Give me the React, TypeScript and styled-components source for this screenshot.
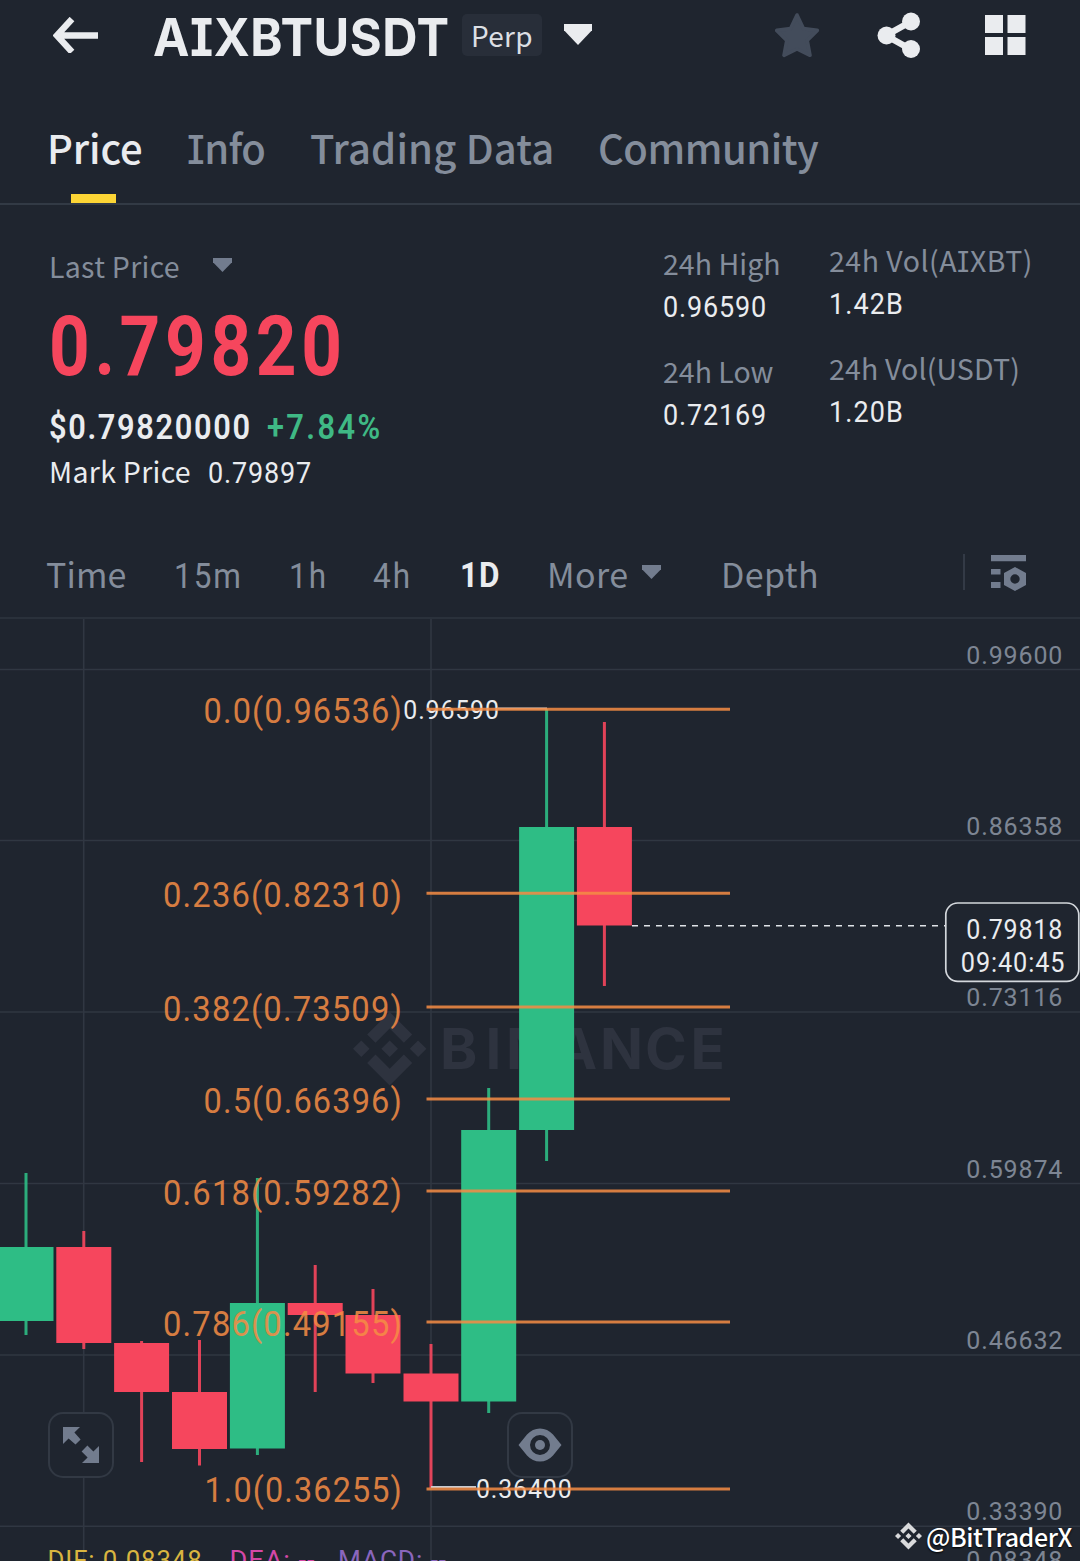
import React from 'react';
import styled, { createGlobalStyle } from 'styled-components';

const color = {
  bg: '#1f252f',
  text: '#eaecef',
  muted: '#848d9b',
  icon: '#727c8e',
  line: '#303742',
  green: '#2ebd85',
  red: '#f6465d',
  fib: '#f58c45',
  yellow: '#fcd535',
};

const sans = `'Noto Sans CJK SC', 'Noto Sans', sans-serif`;
const din = `Roboto, 'Liberation Sans', sans-serif`;

const GlobalStyle = createGlobalStyle`
  body { margin: 0; background: ${color.bg}; }
  * { box-sizing: border-box; }
`;

const Screen = styled.main`
  width: 1080px;
  height: 1561px;
  overflow: hidden;
  background: ${color.bg};
  color: ${color.text};
  font-family: ${sans};
  display: flex;
  flex-direction: column;
  white-space: nowrap;
`;

const Label = styled.span<{ $size?: number; $tone?: string; $weight?: number; $track?: number; $scale?: number }>`
  display: inline-block;
  font-family: ${sans};
  font-size: ${p => p.$size ?? 28.5}px;
  font-weight: ${p => p.$weight ?? 400};
  letter-spacing: ${p => p.$track ?? 0.3}px;
  color: ${p => p.$tone ?? color.muted};
  transform: scaleX(${p => p.$scale ?? 1});
  transform-origin: left;
`;

const Digits = styled.span<{
  $size?: number;
  $tone?: string;
  $weight?: number;
  $track?: number;
  $scale?: number;
  $drop?: number;
}>`
  display: inline-block;
  padding-top: ${p => p.$drop ?? 0}px;
  font-family: ${din};
  font-size: ${p => p.$size ?? 30}px;
  font-weight: ${p => p.$weight ?? 400};
  letter-spacing: ${p => p.$track ?? 0.93}px;
  color: ${p => p.$tone ?? color.text};
  transform: scaleX(${p => p.$scale ?? 0.9});
  transform-origin: left;
`;

const SlabI = styled.span`
  font-family: Inter, sans-serif;
  font-feature-settings: 'cv08' 1;
  font-size: 0.98em;
`;

/* ---------- header ---------- */

const Header = styled.header`
  height: 71px;
  display: grid;
  grid-template-columns: 100px 309px 102px 211px 102px 108px 42px;
  grid-template-rows: 69px;
  padding-left: 53px;
  align-items: center;
`;

const Title = styled.h1`
  margin: 0;
  padding-top: 6px;
  font-family: Inter, sans-serif;
  font-feature-settings: 'cv08' 1;
  font-size: 52px;
  line-height: 68px;
  font-weight: 700;
  letter-spacing: 0.6px;
  transform: scaleX(0.938);
  transform-origin: left;
`;

const Badge = styled.span`
  width: 80px;
  height: 42px;
  margin-top: 1px;
  padding-left: 9px;
  border-radius: 5px;
  background: #282e39;
  line-height: 43px;
`;

/* ---------- tabs ---------- */

const Tabs = styled.nav`
  height: 134px;
  padding-left: 47px;
  border-bottom: 2px solid #323a45;
  display: grid;
  grid-template-columns: 140px 123px 288px 240px;
`;

const Tab = styled.div`
  display: flex;
  flex-direction: column;
  padding-top: 46px;
  line-height: 60px;
`;

const Underline = styled.i`
  width: 45px;
  height: 9px;
  margin: 17px 0 0 24px;
  background: ${color.yellow};
`;

/* ---------- summary ---------- */

const Summary = styled.section`
  height: 325px;
  display: grid;
  grid-template-columns: 614px 166px 250px;
  padding-left: 49px;
`;

const PriceColumn = styled.div`
  padding-top: 43px;
`;

const Row = styled.div<{ $h: number; $top?: number; $cols?: string }>`
  display: grid;
  grid-template-columns: ${p => p.$cols ?? 'auto'};
  align-items: baseline;
  height: ${p => p.$h}px;
  line-height: ${p => p.$h}px;
  margin-top: ${p => p.$top ?? 0}px;
`;

const StatColumn = styled.div<{ $top: number }>`
  padding-top: ${p => p.$top}px;
  display: flex;
  flex-direction: column;
  gap: 25px;
`;

const Stat = styled.div`
  height: 83px;
  display: grid;
  grid-template-rows: 36px 42px;
  row-gap: 5px;
  line-height: 36px;

  & > :last-child { line-height: 42px; }
`;

/* ---------- intervals ---------- */

const Intervals = styled.nav`
  height: 89px;
  padding-left: 46px;
  border-bottom: 2px solid #2a313b;
  display: grid;
  grid-template-columns: 128px 115px 84px 87px 87px 95px 79px 242px 28px 40px;
  grid-template-rows: 87px;
  align-items: center;
  line-height: 86px;
`;

const Divider = styled.i`
  width: 2px;
  height: 36px;
  margin-bottom: 3px;
  background: #333a46;
`;

const SettingsIcon = styled.svg`
  margin-bottom: 1px;
`;

/* ---------- chart ---------- */

const ChartArea = styled.section`
  position: relative;
  height: 942px;
`;

const ChartSvg = styled.svg`
  display: block;
  font-family: ${din};
`;

const ChartButton = styled.button<{ $left: number }>`
  position: absolute;
  left: ${p => p.$left}px;
  top: 793px;
  width: 66px;
  height: 66px;
  padding: 0;
  border: 2px solid #323944;
  border-radius: 15px;
  background: ${color.bg};
  display: flex;
  align-items: center;
  justify-content: center;
`;

const Credit = styled.div`
  position: absolute;
  left: 895px;
  top: 899px;
  display: flex;
  align-items: center;
  gap: 4px;
  height: 36px;
  font-size: 25px;
  font-weight: 500;
  letter-spacing: -0.42px;
  line-height: 36px;
  color: #fff;
  text-shadow: 0 1px 2px #000;
`;

const BINANCE =
  'M16.624 13.9202l2.7175 2.7154-7.353 7.353-7.353-7.352 2.7175-2.7164 4.6355 4.6595 4.6356-4.6595zm4.6366-4.6366L24 12l-2.7154 2.7164L18.5682 12l2.6924-2.7164zm-9.272.001l2.7163 2.6914-2.7164 2.7174v-.001L9.2721 12l2.7164-2.7154zm-9.2722-.001L5.4088 12l-2.6914 2.6924L0 12l2.7164-2.7164zM11.9885.0115l7.353 7.329-2.7174 2.7154-4.6356-4.6356-4.6355 4.6595-2.7174-2.7154 7.353-7.353z';

const CaretSvg = styled.svg`
  display: block;
`;

const Caret = ({ w, h, fill, lift = 0 }: { w: number; h: number; fill: string; lift?: number }) => (
  <CaretSvg width={w} height={h + lift} viewBox={`0 0 ${w} ${h + lift}`}>
    <path d={`M0 0H${w}V${h * 0.3}L${w / 2} ${h}L0 ${h * 0.3}Z`} fill={fill} />
  </CaretSvg>
);

const gridRows: [number, string][] = [
  [669.5, '0.99600'],
  [840.5, '0.86358'],
  [1012, '0.73116'],
  [1183.5, '0.59874'],
  [1355, '0.46632'],
  [1526.2, '0.33390'],
];

type Candle = { x: number; up?: boolean; high: number; top: number; bottom: number; low: number };
const candles: Candle[] = [
  { x: 26, up: true, high: 1173, top: 1247, bottom: 1321, low: 1335 },
  { x: 83.8, high: 1231, top: 1247, bottom: 1343, low: 1349 },
  { x: 141.6, high: 1341, top: 1343, bottom: 1392, low: 1462 },
  { x: 199.5, high: 1340, top: 1392, bottom: 1449, low: 1465.5 },
  { x: 257.4, up: true, high: 1178, top: 1303, bottom: 1448.5, low: 1455 },
  { x: 315.2, high: 1265, top: 1303, bottom: 1315, low: 1392 },
  { x: 373, high: 1289, top: 1315, bottom: 1373.5, low: 1383 },
  { x: 431, high: 1344, top: 1373.5, bottom: 1401.5, low: 1488 },
  { x: 488.7, up: true, high: 1088, top: 1130, bottom: 1401.5, low: 1413 },
  { x: 546.6, up: true, high: 709, top: 827, bottom: 1130, low: 1161 },
  { x: 604.4, high: 722, top: 827, bottom: 925.5, low: 986 },
];

const fibs: [number, number, string, number][] = [
  [709.3, 722.5, '0.0(0.96536)', 204.5],
  [893.3, 907, '0.236(0.82310)', 164],
  [1007, 1021, '0.382(0.73509)', 164],
  [1099, 1113, '0.5(0.66396)', 204.5],
  [1191, 1205, '0.618(0.59282)', 164],
  [1322, 1336, '0.786(0.49155)', 164],
  [1489, 1502, '1.0(0.36255)', 205.5],
];

type FitProps = { x: number; y: number; w: number; size: number; fill: string; children: string };
const FitText = ({ x, y, w, size, fill, children }: FitProps) => (
  <text x={x} y={y} textLength={w} lengthAdjust="spacingAndGlyphs" fontSize={size} fill={fill} letterSpacing={size * 0.035}>
    {children}
  </text>
);

const Chart = () => (
  <ChartSvg width="1080" height="942" viewBox="0 619 1080 942">
    <g fill="#2e333f">
      <path d={BINANCE} transform="translate(353 1012) scale(3.06)" />
      <text x="440 485.5 506 555 600 645 690.5" y="1069" fontFamily="Inter" fontWeight="700" fontSize="56.5">BINANCE</text>
    </g>
    {gridRows.map(([y]) => (
      <line key={y} x1="0" x2="1080" y1={y} y2={y} stroke={color.line} strokeWidth="1.6" />
    ))}
    {[83.7, 431].map(x => (
      <line key={x} x1={x} x2={x} y1="619" y2="1561" stroke={color.line} strokeWidth="1.6" />
    ))}
    {gridRows.map(([y, label]) => (
      <FitText key={label} x={966.3} y={y - 6} w={97} size={26.5} fill="#7d8593">{label}</FitText>
    ))}
    <FitText x={966.3} y={1569} w={97} size={26.5} fill="#7d8593">0.08348</FitText>

    {candles.map(c => (
      <g key={c.x} fill={c.up ? color.green : color.red}>
        <rect x={c.x - 1.5} y={c.high} width="3" height={c.low - c.high} opacity="0.9" />
        <rect x={c.x - 27.5} y={c.top} width="55" height={c.bottom - c.top} />
      </g>
    ))}

    <line x1="498" x2="547" y1="708.5" y2="708.5" stroke="#c8ccd2" strokeWidth="2" />
    <line x1="431" x2="476" y1="1487" y2="1487" stroke="#c8ccd2" strokeWidth="2" />
    <FitText x={403.3} y={718.7} w={96.5} size={26} fill={color.text}>0.96590</FitText>
    <FitText x={476} y={1498} w={96.5} size={26} fill={color.text}>0.36400</FitText>

    {fibs.map(([y, base, label, x]) => (
      <g key={label} opacity="0.86">
        <line x1="426.5" x2="730" y1={y} y2={y} stroke={color.fib} strokeWidth="3" />
        <FitText x={x - 1} y={base} w={404 - x} size={34.5} fill={color.fib}>{label}</FitText>
      </g>
    ))}

    <line x1="632" x2="945" y1="925.7" y2="925.7" stroke="#dfe3e8" strokeWidth="1.6" strokeDasharray="6 6" />
    <rect x="945.8" y="903" width="133" height="78.3" rx="12" fill={color.bg} stroke="#d3d7dc" strokeWidth="1.7" />
    <FitText x={966.3} y={939} w={97} size={27} fill={color.text}>0.79818</FitText>
    <FitText x={960.8} y={972} w={104.5} size={27} fill={color.text}>09:40:45</FitText>

    <FitText x={47.5} y={1568.5} w={155} size={26} fill="#d9b540">DIF: 0.08348</FitText>
    <FitText x={229.5} y={1568.5} w={86} size={26} fill="#d548a8">DEA: --</FitText>
    <FitText x={338} y={1568.5} w={109} size={26} fill="#8a66bd">MACD: --</FitText>
  </ChartSvg>
);

export default function App() {
  return (
    <Screen>
      <GlobalStyle />
      <Header>
        <svg width="45" height="36" viewBox="0 0 45 36">
          <path d="M45 18.5H4M19 2L3.8 18.5L19 35" fill="none" stroke={color.text} strokeWidth="6.4" />
        </svg>
        <Title>AIXBTUSDT</Title>
        <Badge><Label $size={28} $tone="#dcdfe4" $track={0.3}>Perp</Label></Badge>
        <Caret w={28} h={21} fill={color.text} />
        <svg width="46" height="48" viewBox="0 0 46 48">
          <path d="M22 4L28.4 17.6L42.3 19.4L32.2 29.4L35 44.3L22 38L9 44.3L11.8 29.4L1.7 19.4L15.6 17.6Z" fill="#434c5b" stroke="#434c5b" strokeWidth="3.6" strokeLinejoin="round" />
        </svg>
        <svg width="44" height="46" viewBox="0 0 44 46">
          <path d="M34 9.5L9 23.5L34 37.5" fill="none" stroke={color.text} strokeWidth="6.5" />
          <g fill={color.text}>
            <circle cx="34" cy="9.5" r="9" />
            <circle cx="9.5" cy="23.5" r="9" />
            <circle cx="34" cy="37" r="9" />
          </g>
        </svg>
        <svg width="41" height="41" viewBox="0 0 41 41">
          <path d="M0 1h18v18H0zM22.5 1h18v18h-18zM0 23h18v18H0zM22.5 23h18v18h-18z" fill={color.text} />
        </svg>
      </Header>

      <Tabs>
        <Tab>
          <Label $size={40} $weight={500} $tone={color.text} $track={-0.1}>Price</Label>
          <Underline />
        </Tab>
        <Tab><Label $size={40} $weight={500} $track={-0.6}><SlabI>I</SlabI>nfo</Label></Tab>
        <Tab><Label $size={40} $weight={500} $track={0.15}>Trading Data</Label></Tab>
        <Tab><Label $size={40} $weight={500} $track={-0.5}>Community</Label></Tab>
      </Tabs>

      <Summary>
        <PriceColumn>
          <Row $h={36} $cols="164px 20px">
            <Label>Last Price</Label>
            <Caret w={19} h={14} fill={color.icon} lift={6} />
          </Row>
          <Row $h={90} $top={18}>
            <Digits $size={83} $weight={700} $track={5.4} $scale={0.856} $tone={color.red}>0.79820</Digits>
          </Row>
          <Row $h={44} $top={14} $cols="218px 120px">
            <Digits $size={35} $weight={600} $track={1.85} $scale={0.88}>$0.79820000</Digits>
            <Digits $size={35} $weight={600} $track={2.75} $scale={0.88} $tone="#3fb985">+7.84%</Digits>
          </Row>
          <Row $h={40} $top={1} $cols="159px 110px">
            <Label $tone={color.text}>Mark Price</Label>
            <Digits>0.79897</Digits>
          </Row>
        </PriceColumn>
        <StatColumn $top={40}>
          <Stat><Label $track={0.05}>24h High</Label><Digits>0.96590</Digits></Stat>
          <Stat><Label $track={0}>24h Low</Label><Digits>0.72169</Digits></Stat>
        </StatColumn>
        <StatColumn $top={37}>
          <Stat><Label $track={0.5}>24h Vol(A<SlabI>I</SlabI>XBT)</Label><Digits $track={1.2}>1.42B</Digits></Stat>
          <Stat><Label $track={0.15}>24h Vol(USDT)</Label><Digits $track={1.2}>1.20B</Digits></Stat>
        </StatColumn>
      </Summary>

      <Intervals>
        <Label $size={34} $track={0.1}>Time</Label>
        <Digits $size={35} $tone={color.muted} $track={2.2} $drop={6}>15m</Digits>
        <Digits $size={35} $tone={color.muted} $track={2.2} $drop={6}>1h</Digits>
        <Digits $size={35} $tone={color.muted} $track={2.2} $drop={6}>4h</Digits>
        <Digits $size={35} $weight={700} $drop={4}>1D</Digits>
        <Label $size={34} $track={0.4}>More</Label>
        <Caret w={19} h={14} fill={color.icon} lift={3} />
        <Label $size={34} $track={0.4}>Depth</Label>
        <Divider />
        <SettingsIcon width="36" height="36" viewBox="0 0 36 36" fill={color.icon}>
          <path d="M0 0h35v6.3H0zM0 14h9.5v5.5H0zM0 27h9.5v6H0z" />
          <path fillRule="evenodd" d="M24 12L35 18V30L24 36L13 30V18ZM24 19.3A4.7 4.7 0 1 0 24 28.7A4.7 4.7 0 1 0 24 19.3Z" />
        </SettingsIcon>
      </Intervals>

      <ChartArea>
        <Chart />
        <ChartButton $left={48} aria-label="Expand">
          <svg width="38" height="38" viewBox="0 0 38 38" fill={color.icon}>
            <path d="M1 1H18L12.4 6.6L18.6 13.5L13.5 18.6L6.6 12.4L1 18ZM37 37H20L25.6 31.4L19.6 25.4L25.4 19.6L31.4 25.6L37 20Z" />
          </svg>
        </ChartButton>
        <ChartButton $left={507} aria-label="Toggle visibility">
          <svg width="44" height="34" viewBox="0 0 44 34" fill={color.icon}>
            <path fillRule="evenodd" d="M0.5 17L9 6.5Q14.5 0.5 22 0.5Q29.5 0.5 35 6.5L43.5 17L35 27.5Q29.5 33.5 22 33.5Q14.5 33.5 9 27.5ZM22 7A10 10 0 1 0 22 27A10 10 0 1 0 22 7Z" />
            <circle cx="22" cy="17" r="5" />
          </svg>
        </ChartButton>
        <Credit>
          <svg width="27" height="28" viewBox="0 0 24 24" fill="#d9dadc"><path d={BINANCE} /></svg>
          <span>@BitTraderX</span>
        </Credit>
      </ChartArea>
    </Screen>
  );
}
